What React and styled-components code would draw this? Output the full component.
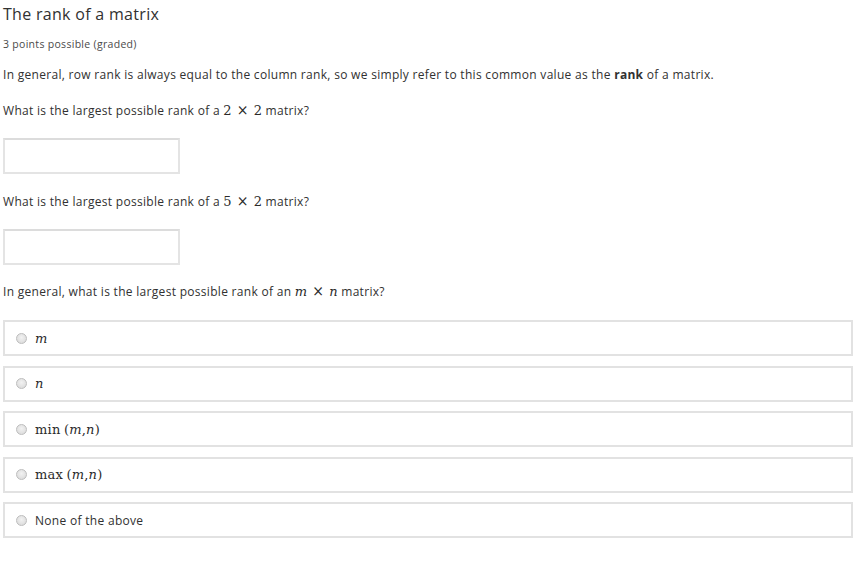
import React from 'react';
import styled, { createGlobalStyle } from 'styled-components';

const GlobalStyle = createGlobalStyle`
  html, body {
    margin: 0;
    padding: 0;
    background: #fff;
  }
  body {
    font-family: "Open Sans", "Liberation Sans", sans-serif;
    color: #313131;
  }
`;

const Problem = styled.section`
  padding: 4px 12px 0 3px;
  width: 850px;
`;

const Title = styled.h2`
  margin: 0;
  font-size: 16px;
  line-height: 20px;
  font-weight: 400;
  letter-spacing: 0.3px;
  color: #313131;
`;

const Points = styled.div`
  margin-top: 13px;
  font-size: 10.5px;
  line-height: 14px;
  letter-spacing: 0.3px;
  color: #4a4a4a;
`;

const Text = styled.p`
  margin: ${p => p.$top || 18}px 0 0;
  font-size: 12px;
  line-height: 18px;
  letter-spacing: 0.3px;
  color: #313131;
  b { font-weight: 700; }
`;

const M = styled.span`
  font-family: "DejaVu Serif", "Liberation Serif", serif;
  font-size: ${p => (p.$op ? 14 : 13)}px;
  line-height: 1;
  font-weight: 300;
  letter-spacing: 0.2px;
  color: #2a2a2a;
  font-style: ${p => (p.$up ? 'normal' : 'italic')};
  margin: 0 ${p => p.$gap || 0}px;
`;

const Answer = styled.input`
  display: block;
  box-sizing: border-box;
  margin-top: 18px;
  width: 177px;
  height: 36px;
  border: 2px solid #e4e4e4;
  border-top-color: #dcdcdc;
  background: #fff;
  outline: none;
`;

const Choices = styled.div`
  margin-top: 19px;
  display: flex;
  flex-direction: column;
  gap: 9.6px;
`;

const Choice = styled.label`
  box-sizing: border-box;
  height: 36px;
  display: flex;
  align-items: center;
  gap: 8px;
  padding-left: 11px;
  border: 2px solid #e2e2e2;
  font-size: 12px;
  letter-spacing: 0.3px;
  color: #313131;
`;

const Radio = styled.span`
  box-sizing: border-box;
  width: 11px;
  height: 11px;
  border-radius: 50%;
  border: 1px solid #bdbdbd;
  background: radial-gradient(circle at 50% 40%, #f2f2f2 0%, #dcdcdc 80%);
  flex: none;
`;

const choices = [
  <M>m</M>,
  <M>n</M>,
  <span><M $up>min</M> <M $up>(</M><M>m</M><M $up>,</M><M>n</M><M $up>)</M></span>,
  <span><M $up>max</M> <M $up>(</M><M>m</M><M $up>,</M><M>n</M><M $up>)</M></span>,
  <span>None of the above</span>,
];

export default function App() {
  return (
    <>
      <GlobalStyle />
      <Problem>
        <Title>The rank of a matrix</Title>
        <Points>3 points possible (graded)</Points>
        <Text $top={15}>
          In general, row rank is always equal to the column rank, so we simply refer to this common value as the <b>rank</b> of a matrix.
        </Text>
        <Text>
          What is the largest possible rank of a <M $up>2</M><M $up $op $gap={5}>×</M><M $up>2</M> matrix?
        </Text>
        <Answer type="text" />
        <Text $top={19}>
          What is the largest possible rank of a <M $up>5</M><M $up $op $gap={5}>×</M><M $up>2</M> matrix?
        </Text>
        <Answer type="text" />
        <Text>
          In general, what is the largest possible rank of an <M>m</M><M $up $op $gap={5}>×</M><M>n</M> matrix?
        </Text>
        <Choices>
          {choices.map((c, i) => (
            <Choice key={i}>
              <Radio />
              {c}
            </Choice>
          ))}
        </Choices>
      </Problem>
    </>
  );
}
